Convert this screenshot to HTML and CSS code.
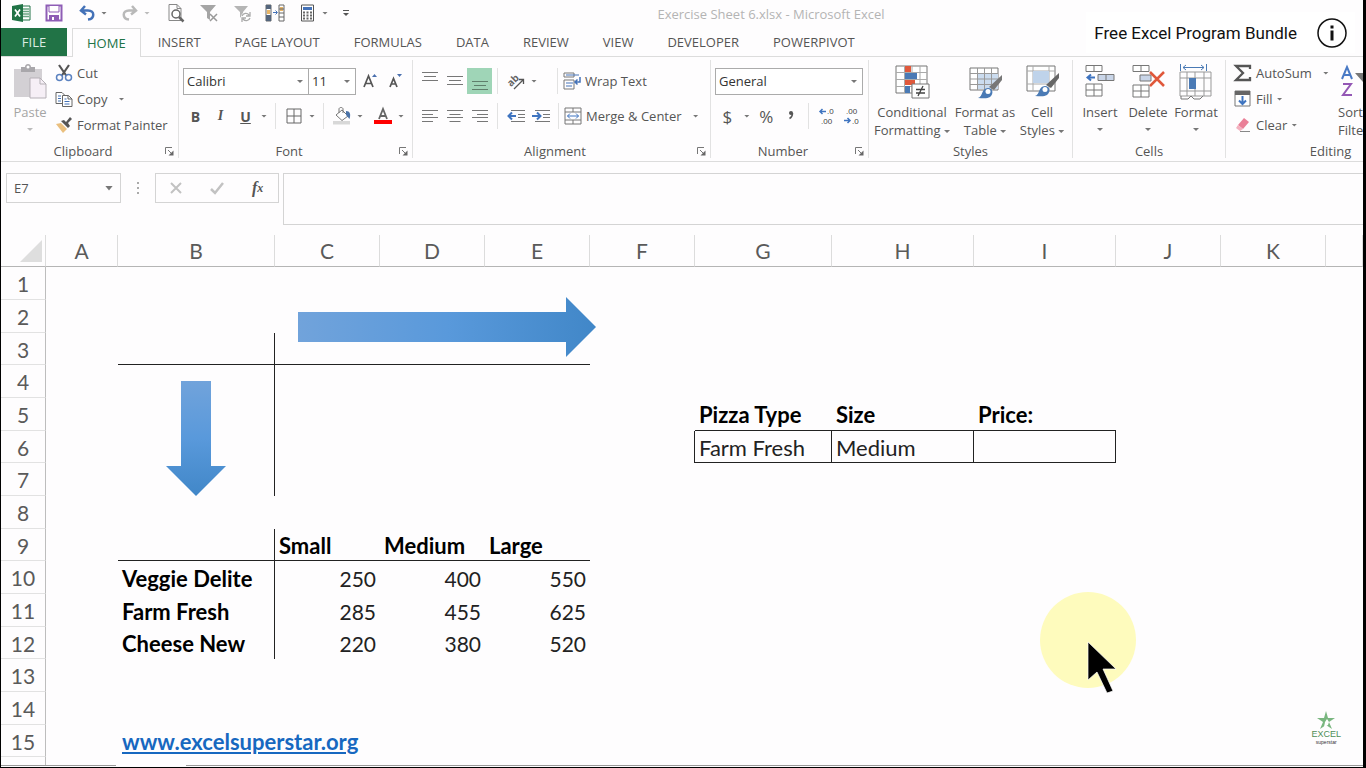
FILE: index.html
```html
<!DOCTYPE html>
<html lang="en">

<head>
    <meta charset="UTF-8">
    <meta name="viewport" content="width=device-width, initial-scale=1.0">
    <title>Exercise Sheet 6.xlsx - Microsoft Excel</title>
    <link rel="stylesheet" href="styles.css">
</head>

<body>
    <div class="window">
        <header class="titlebar">
            <div class="quick-access">
                <svg class="app-logo" width="20" height="20" viewBox="0 0 20 20">
                    <path d="M11 3h8v14h-8z" fill="#fff" stroke="#217346" />
                    <path d="M12 6h6M12 8.500h6M12 11h6M12 13.500h6" stroke="#6aa583" stroke-width="1.500" />
                    <path d="M1 3l11-2v18L1 17z" fill="#217346" />
                    <path d="M4 6.500l5 7M9 6.500l-5 7" stroke="#fff" stroke-width="1.700" />
                </svg>
                <button class="btn qat" aria-label="Save">
                    <svg width="18" height="18" viewBox="0 0 18 18">
                        <path d="M1.500 1.500h15v15h-15z" fill="#fff" stroke="#8e5db5" stroke-width="2" />
                        <path d="M4 2v6h10V2" fill="#fff" stroke="#8e5db5" />
                        <path d="M4 11h10v6H4z" fill="#8e5db5" />
                        <path d="M7 13h2v3H7z" fill="#fff" />
                    </svg>
                </button>
                <button class="btn qat" aria-label="Undo">
                    <svg width="18" height="18" viewBox="0 0 18 18" fill="none" stroke="#4472b8" stroke-width="2.500">
                        <path d="M7 2L3 6.500l5 4M3 6.500h7c7 0 7 8 0 9" />
                    </svg>
                </button>
                <span class="caret"></span>
                <button class="btn qat redo" aria-label="Redo">
                    <svg width="18" height="18" viewBox="0 0 18 18" fill="none" stroke="#b9b9b9" stroke-width="2.500">
                        <path d="M11 2l4 4.500-5 4M15 6.500H8c-7 0-7 8 0 9" />
                    </svg>
                </button>
                <span class="caret pale"></span>
                <button class="btn qat preview" aria-label="Print Preview">
                    <svg width="18" height="20" viewBox="0 0 18 20" fill="none" stroke="#666">
                        <path d="M2 1.500h8l4 4v12H2zM10 1.500v4h4" stroke="#888" />
                        <circle cx="9" cy="11" r="4" fill="#fff" stroke-width="1.500" />
                        <path d="M12 14l4.500 4.500" stroke-width="2.500" />
                    </svg>
                </button>
                <button class="btn qat" aria-label="Clear Filter">
                    <svg width="20" height="20" viewBox="0 0 20 20">
                        <path d="M1 2h16l-6 7v8l-3-2V9z" fill="#a5a5a5" />
                        <path d="M11 11l7 7M18 11l-7 7" stroke="#999" stroke-width="1.500" />
                    </svg>
                </button>
                <button class="btn qat" aria-label="Reapply Filter">
                    <svg width="20" height="20" viewBox="0 0 20 20">
                        <path d="M2 3h14l-5 6v7l-3-2V9z" fill="#b5b5b5" />
                        <circle cx="14" cy="14" r="5" fill="#fff" />
                        <path d="M10 13a4 4 0 0 1 7-1M18 15a4 4 0 0 1-7 1M18 9v4h-4M10 19v-4h4" fill="none" stroke="#aaa" stroke-width="1.300" />
                    </svg>
                </button>
                <button class="btn qat" aria-label="Compare">
                    <svg width="20" height="18" viewBox="0 0 20 18">
                        <path d="M1 1h5v16H1zM14 1h5v16h-5z" fill="#fff" stroke="#666" />
                        <path d="M1 1h5v4H1zM1 11h5v6H1z" fill="#54657c" />
                        <path d="M2 6h3v4H2zM15 3h3v4h-3z" fill="#e9b667" />
                        <path d="M14 5h5M14 9h5M14 13h5" stroke="#666" />
                        <path d="M8 8.500h4M10.500 6.500l2 2-2 2" fill="none" stroke="#4472b8" />
                    </svg>
                </button>
                <button class="btn qat" aria-label="Calculator">
                    <svg width="16" height="18" viewBox="0 0 16 18">
                        <path d="M1.500 1h12v16h-12z" fill="#fff" stroke="#555" />
                        <path d="M3 3h9v3H3z" fill="#4472b8" />
                        <path d="M3 8.500h9M3 11.500h9M3 14.500h9" stroke="#666" stroke-width="2" stroke-dasharray="2 1.500" />
                    </svg>
                </button>
                <span class="caret"></span>
                <button class="btn more" aria-label="Customize Quick Access Toolbar">
                    <svg width="8" height="8" viewBox="0 0 8 8">
                        <path d="M1 1.500h6" stroke="#555" />
                        <path d="M1 4h6L4 7z" fill="#555" />
                    </svg>
                </button>
            </div>
            <div class="title">Exercise Sheet 6.xlsx - Microsoft Excel</div>
        </header>

        <nav class="tabs">
            <button class="tab file">FILE</button>
            <button class="tab active">HOME</button>
            <button class="tab">INSERT</button>
            <button class="tab">PAGE LAYOUT</button>
            <button class="tab">FORMULAS</button>
            <button class="tab">DATA</button>
            <button class="tab">REVIEW</button>
            <button class="tab">VIEW</button>
            <button class="tab">DEVELOPER</button>
            <button class="tab">POWERPIVOT</button>
        </nav>

        <div class="ribbon">
            <!-- Clipboard -->
            <section class="group clipboard">
                <div class="group-body">
                    <button class="big paste">
                        <svg width="34" height="36" viewBox="0 0 34 36">
                            <path d="M1 5h28v28H1z" fill="#d3d0d4" />
                            <path d="M8 3h4c0-4 6-4 6 0h4v5H8z" fill="#a9a7ab" />
                            <circle cx="15" cy="3" r="1.500" fill="#fff" />
                            <path d="M17 14h10l6 6v14H17z" fill="#f6eff6" stroke="#b5b0b6" />
                            <path d="M27 14v6h6" fill="none" stroke="#b5b0b6" />
                        </svg>
                        <span>Paste</span>
                        <span class="caret pale"></span>
                    </button>
                    <div class="stack">
                        <button class="btn small">
                            <svg width="18" height="18" viewBox="0 0 18 18" fill="none">
                                <path d="M4 1l7.500 11M14 1L6.500 12" stroke="#555" stroke-width="2.200" />
                                <circle cx="4.500" cy="13.500" r="3" stroke="#5b82c0" stroke-width="1.500" />
                                <circle cx="13.500" cy="13.500" r="3" stroke="#5b82c0" stroke-width="1.500" />
                            </svg>
                            Cut
                        </button>
                        <button class="btn small">
                            <svg width="18" height="18" viewBox="0 0 18 18" fill="#fff" stroke="#666">
                                <path d="M1 2.500h6l3 3v8H1z" />
                                <path d="M3 6h3M3 8.500h3M3 11h3" stroke="#4472b8" />
                                <path d="M7.500 5.500h6l3.500 3.500v7.500h-9.500zM13 5.500V9h4" />
                                <path d="M9.500 9h2M9.500 11.500h5M9.500 14h5" stroke="#4472b8" />
                            </svg>
                            Copy <span class="caret gap"></span>
                        </button>
                        <button class="btn small">
                            <svg width="18" height="18" viewBox="0 0 18 18">
                                <path d="M1 8l5-1 6 6-4 4z" fill="#eabf7e" />
                                <path d="M6 5l3-1 2 2 4-5 2 2-4 4 2 3-2 2z" fill="#555" />
                            </svg>
                            Format Painter
                        </button>
                    </div>
                </div>
                <div class="group-foot">
                    <span>Clipboard</span>
                    <button class="launcher" aria-label="Clipboard settings"><svg width="9" height="9" viewBox="0 0 9 9"><path d="M.5 7V.5H7M3 3l4 4" fill="none" stroke="#777" /><path d="M8.500 3.500v5h-5z" fill="#666" /></svg></button>
                </div>
            </section>

            <!-- Font -->
            <section class="group font">
                <div class="group-body rows">
                    <div class="line">
                        <select class="combo name" aria-label="Font"><option>Calibri</option></select>
                        <select class="combo size" aria-label="Font size"><option>11</option></select>
                        <button class="btn tool grow" aria-label="Increase Font Size">
                            <svg width="18" height="18" viewBox="0 0 18 18"><path d="M2 15L6.500 4 11 15M3.500 11.500h6" fill="none" stroke="#555" stroke-width="1.700" /><path d="M10 5l2.500-3L15 5z" fill="#4a6fae" /></svg>
                        </button>
                        <button class="btn tool" aria-label="Decrease Font Size">
                            <svg width="18" height="18" viewBox="0 0 18 18"><path d="M3 15l3.500-8.500L10 15M4.500 12h4" fill="none" stroke="#555" stroke-width="1.700" /><path d="M10 2h5l-2.500 3z" fill="#4a6fae" /></svg>
                        </button>
                    </div>
                    <div class="line">
                        <button class="btn tool"><b>B</b></button>
                        <button class="btn tool"><i class="italic">I</i></button>
                        <button class="btn tool"><b class="underline">U</b></button>
                        <span class="caret"></span>
                        <span class="sep"></span>
                        <button class="btn tool" aria-label="Borders">
                            <svg width="16" height="16" viewBox="0 0 16 16"><path d="M1 1h14v14H1zM8 1v14M1 8h14" fill="none" stroke="#666" /></svg>
                        </button>
                        <span class="caret"></span>
                        <span class="sep"></span>
                        <button class="btn tool" aria-label="Fill Color">
                            <svg width="20" height="18" viewBox="0 0 20 18">
                                <path d="M1 14h17v3.500H1z" fill="#d8d8d8" />
                                <path d="M4 8l6-5 6 6-6 4.500z" fill="#fff" stroke="#777" />
                                <path d="M7 6V2c0-2 4-2 4 0v4" fill="none" stroke="#777" />
                                <path d="M14 4c4 0 5 3 3.500 8L14 8z" fill="#4b73a8" />
                            </svg>
                        </button>
                        <span class="caret"></span>
                        <button class="btn tool color" aria-label="Font Color">
                            <svg width="18" height="18" viewBox="0 0 18 18"><path d="M5 12L9 2l4 10M6 9h6" fill="none" stroke="#666" stroke-width="1.800" /><path d="M0 13h18v4H0z" fill="#f00" /></svg>
                        </button>
                        <span class="caret"></span>
                    </div>
                </div>
                <div class="group-foot">
                    <span>Font</span>
                    <button class="launcher" aria-label="Font settings"><svg width="9" height="9" viewBox="0 0 9 9"><path d="M.5 7V.5H7M3 3l4 4" fill="none" stroke="#777" /><path d="M8.500 3.500v5h-5z" fill="#666" /></svg></button>
                </div>
            </section>

            <!-- Alignment -->
            <section class="group alignment">
                <div class="group-body rows">
                    <div class="line">
                        <button class="btn tool" aria-label="Top Align"><svg width="16" height="18" viewBox="0 0 16 18"><path d="M0 .5h16M2 4.500h12M0 8.500h16" stroke="#777" /></svg></button>
                        <button class="btn tool" aria-label="Middle Align"><svg width="16" height="18" viewBox="0 0 16 18"><path d="M0 4.500h16M2 8.500h12M0 12.500h16" stroke="#777" /></svg></button>
                        <button class="btn tool on" aria-label="Bottom Align"><svg width="16" height="18" viewBox="0 0 16 18"><path d="M0 9.500h16M2 13.500h12M0 17.500h16" stroke="#5f7f6c" /></svg></button>
                        <span class="sep"></span>
                        <button class="btn tool" aria-label="Orientation">
                            <svg width="20" height="20" viewBox="0 0 20 20"><text x="1" y="13" transform="rotate(-45 7 10)" class="ab">ab</text><path d="M8 18l9-9M13 8.500h4.500V13" fill="none" stroke="#555" stroke-width="1.300" /></svg>
                        </button>
                        <span class="caret"></span>
                        <span class="sep wide"></span>
                        <button class="btn small wrap">
                            <svg width="18" height="18" viewBox="0 0 18 18" fill="none" stroke="#777">
                                <path d="M1 1h10v4H1zM1 8h10v9H1z" />
                                <path d="M3 3h13M3 11h7M3 14h6" stroke="#4472b8" />
                                <path d="M17 5v5h-4M14.500 7.500L12 10l2.500 2.500" stroke="#4472b8" stroke-width="1.500" />
                            </svg>
                            Wrap Text
                        </button>
                    </div>
                    <div class="line">
                        <button class="btn tool" aria-label="Align Left"><svg width="16" height="14" viewBox="0 0 16 14"><path d="M0 1.500h16M0 5.500h11M0 8.500h16M0 12.500h11" stroke="#777" /></svg></button>
                        <button class="btn tool" aria-label="Center"><svg width="16" height="14" viewBox="0 0 16 14"><path d="M0 1.500h16M2.500 5.500h11M0 8.500h16M2.500 12.500h11" stroke="#777" /></svg></button>
                        <button class="btn tool" aria-label="Align Right"><svg width="16" height="14" viewBox="0 0 16 14"><path d="M0 1.500h16M5 5.500h11M0 8.500h16M5 12.500h11" stroke="#777" /></svg></button>
                        <span class="sep"></span>
                        <button class="btn tool" aria-label="Decrease Indent"><svg width="18" height="14" viewBox="0 0 18 14"><path d="M4 1.500h14M11 5.500h7M11 8.500h7M4 12.500h14" stroke="#777" /><path d="M9 7H2M5 3.500L1.500 7 5 10.500" fill="none" stroke="#3f74c0" stroke-width="2" /></svg></button>
                        <button class="btn tool" aria-label="Increase Indent"><svg width="18" height="14" viewBox="0 0 18 14"><path d="M3 1.500h15M11 5.500h7M11 8.500h7M3 12.500h15" stroke="#777" /><path d="M0 7h8M5 3.500L8.500 7 5 10.500" fill="none" stroke="#3f74c0" stroke-width="2" /></svg></button>
                        <span class="sep"></span>
                        <button class="btn small merge">
                            <svg width="18" height="18" viewBox="0 0 18 18" fill="none" stroke="#777">
                                <path d="M1 1h16v16H1zM1 5h16M1 13h16M9 1v4M9 13v4" />
                                <path d="M3.500 9h11M6 6.500L3.500 9 6 11.500M12 6.500L14.500 9 12 11.500" stroke="#3f74c0" />
                            </svg>
                            Merge &amp; Center <span class="caret gap"></span>
                        </button>
                    </div>
                </div>
                <div class="group-foot">
                    <span>Alignment</span>
                    <button class="launcher" aria-label="Alignment settings"><svg width="9" height="9" viewBox="0 0 9 9"><path d="M.5 7V.5H7M3 3l4 4" fill="none" stroke="#777" /><path d="M8.500 3.500v5h-5z" fill="#666" /></svg></button>
                </div>
            </section>

            <!-- Number -->
            <section class="group number">
                <div class="group-body rows">
                    <div class="line">
                        <select class="combo format" aria-label="Number format"><option>General</option></select>
                    </div>
                    <div class="line">
                        <button class="btn tool sign">$</button>
                        <span class="caret"></span>
                        <button class="btn tool sign">%</button>
                        <button class="btn tool sign" aria-label="Comma Style">
                            <svg width="8" height="12" viewBox="0 0 8 12"><circle cx="4" cy="3" r="2" fill="#555" /><path d="M5.500 3c0 3-1 4.500-3 5.500" fill="none" stroke="#555" stroke-width="1.500" /></svg>
                        </button>
                        <span class="sep"></span>
                        <button class="btn tool" aria-label="Increase Decimal">
                            <svg width="18" height="22" viewBox="0 0 18 22"><path d="M8 6.500H2M4.500 4L2 6.500 4.500 9" fill="none" stroke="#3f74c0" stroke-width="1.500" /><text x="9" y="9" class="dec">.0</text><text x="3" y="19" class="dec">.00</text></svg>
                        </button>
                        <button class="btn tool" aria-label="Decrease Decimal">
                            <svg width="18" height="22" viewBox="0 0 18 22"><path d="M1 15.500h6M4.500 13L7 15.500 4.500 18" fill="none" stroke="#3f74c0" stroke-width="1.500" /><text x="3" y="9" class="dec">.00</text><text x="9" y="19" class="dec">.0</text></svg>
                        </button>
                    </div>
                </div>
                <div class="group-foot">
                    <span>Number</span>
                    <button class="launcher" aria-label="Number settings"><svg width="9" height="9" viewBox="0 0 9 9"><path d="M.5 7V.5H7M3 3l4 4" fill="none" stroke="#777" /><path d="M8.500 3.500v5h-5z" fill="#666" /></svg></button>
                </div>
            </section>

            <!-- Styles -->
            <section class="group styles">
                <div class="group-body">
                    <button class="big conditional">
                        <svg width="36" height="36" viewBox="0 0 36 36">
                            <path d="M2 2h31v27H2z" fill="#fff" stroke="#777" />
                            <path d="M2 8.500h31M2 15.500h31M2 22.500h31M10.500 2v27M18 2v27M26 2v27" stroke="#aaa" />
                            <path d="M11 2h6v6h-6zM11 16h10v5H11z" fill="#e0583b" />
                            <path d="M11 9h12v6H11zM11 22h5v7h-5z" fill="#4a7ab5" />
                            <path d="M18 20h17v14H18z" fill="#fff" stroke="#777" />
                            <path d="M22 25.500h9M22 29h9M29 22l-5 10" stroke="#444" stroke-width="1.300" />
                        </svg>
                        <span>Conditional</span>
                        <span>Formatting <span class="caret"></span></span>
                    </button>
                    <button class="big table-style">
                        <svg width="36" height="36" viewBox="0 0 36 36">
                            <path d="M3 4h28v22H3z" fill="#fff" stroke="#777" />
                            <path d="M11 10h20v15H11z" fill="#cbdcef" />
                            <path d="M3 9.500h28M3 15h28M3 20.500h28M10.500 4v22M17.500 4v22M24.500 4v22" stroke="#999" />
                            <path d="M35 11v5L27 26l-5-3z" fill="#777" />
                            <path d="M11 34c5-1 3-10 10-10 5 0 6 6 2 9-3 2-8 1-12 1z" fill="#4a7ab5" />
                            <circle cx="21" cy="27.500" r="2.500" fill="#fff" />
                        </svg>
                        <span>Format as</span>
                        <span>Table <span class="caret"></span></span>
                    </button>
                    <button class="big cell-style">
                        <svg width="36" height="36" viewBox="0 0 36 36">
                            <path d="M3 2h28v25H3z" fill="#fff" stroke="#777" />
                            <path d="M3 7h28M3 20h28M9 2v25M25 2v25" stroke="#aaa" />
                            <path d="M9 7h16v12H9z" fill="#bfd3ea" />
                            <path d="M35 9v5L27 24l-5-3z" fill="#666" />
                            <path d="M11 32c5-1 3-10 10-10 5 0 6 6 2 9-3 2-8 1-12 1z" fill="#4a7ab5" />
                            <circle cx="21" cy="25.500" r="2.500" fill="#fff" />
                        </svg>
                        <span>Cell</span>
                        <span>Styles <span class="caret"></span></span>
                    </button>
                </div>
                <div class="group-foot"><span>Styles</span></div>
            </section>

            <!-- Cells -->
            <section class="group cells">
                <div class="group-body">
                    <button class="big">
                        <svg width="34" height="36" viewBox="0 0 34 36" fill="#fff" stroke="#777">
                            <path d="M3 1.500h16v6H3zM11 1.500v6M3 20h16v12H3zM3 26h16M11 20v12" />
                            <path d="M15 10.500h16v6H15z" fill="#c9d5e8" />
                            <path d="M23 10.500v6" />
                            <path d="M12 13.500H5M8 10.500L4.500 13.500 8 16.500" fill="none" stroke="#3f74c0" stroke-width="2" />
                        </svg>
                        <span>Insert</span>
                        <span class="caret"></span>
                    </button>
                    <button class="big">
                        <svg width="34" height="36" viewBox="0 0 34 36" fill="#fff" stroke="#777">
                            <path d="M2 1.500h16v6H2zM10 1.500v6M2 21h16v12H2zM2 27h16M10 21v12" />
                            <path d="M9 11h11v6H9z" fill="#c9d5e8" />
                            <path d="M19 8l14 14M33 8L19 22" stroke="#e0583b" stroke-width="2.500" />
                        </svg>
                        <span>Delete</span>
                        <span class="caret"></span>
                    </button>
                    <button class="big">
                        <svg width="34" height="36" viewBox="0 0 34 36" fill="none" stroke="#999">
                            <path d="M1 8h31v24H1zM1 14h31M1 27h31M8 8v24M16 8v24M25 8v24" />
                            <path d="M2 32v3h7l3-3 3 3h6l3-3" stroke="#777" />
                            <path d="M10 14h7v11h-7z" fill="#4a7ab5" stroke="none" />
                            <path d="M1.500 0v7M27.500 0v7M4 3.500h21M7 1L4 3.500 7 6M22 1l3 2.500L22 6" stroke="#4a7ab5" />
                        </svg>
                        <span>Format</span>
                        <span class="caret"></span>
                    </button>
                </div>
                <div class="group-foot"><span>Cells</span></div>
            </section>

            <!-- Editing -->
            <section class="group editing">
                <div class="group-body">
                    <div class="stack">
                        <button class="btn small">
                            <svg width="18" height="18" viewBox="0 0 18 18"><path d="M16 5V2H2l7 7-7 7h14v-3" fill="none" stroke="#555" stroke-width="2.300" /></svg>
                            AutoSum <span class="caret gap"></span>
                        </button>
                        <button class="btn small">
                            <svg width="18" height="18" viewBox="0 0 18 18"><path d="M1 1h15v15H1z" fill="#fff" stroke="#777" /><path d="M1 1h15v4H1z" fill="#666" /><path d="M8.500 6v8M5 10.500L8.500 14l3.500-3.500" fill="none" stroke="#3f74c0" stroke-width="2" /></svg>
                            Fill <span class="caret"></span>
                        </button>
                        <button class="btn small">
                            <svg width="18" height="18" viewBox="0 0 18 18"><path d="M4 9l6-7 5 4-6 7z" fill="#ea7f97" /><path d="M4 9l5 4-3 2-4-3z" fill="#f3b1bf" /><path d="M6 15.500h10" stroke="#888" /></svg>
                            Clear <span class="caret"></span>
                        </button>
                    </div>
                    <button class="big sort">
                        <svg width="40" height="36" viewBox="0 0 40 36">
                            <path d="M4 15l5-12 5 12M6 11h6" fill="none" stroke="#4a7ac5" stroke-width="2" />
                            <path d="M5 20h8L5 31h9" fill="none" stroke="#9457b5" stroke-width="2" />
                            <path d="M17 9h20l-8 9v12l-4-3v-9z" fill="#777" />
                        </svg>
                        <span>Sort &amp;</span>
                        <span>Filter <span class="caret"></span></span>
                    </button>
                </div>
                <div class="group-foot"><span>Editing</span></div>
            </section>
        </div>

        <div class="formula-bar">
            <div class="name-box">
                <input type="text" value="E7" aria-label="Name Box">
                <span class="caret large"></span>
            </div>
            <span class="grip"></span>
            <div class="formula-buttons">
                <button class="btn" aria-label="Cancel"><svg width="14" height="14" viewBox="0 0 14 14"><path d="M2 2l10 10M12 2L2 12" stroke="#c2c2c2" stroke-width="2" /></svg></button>
                <button class="btn" aria-label="Enter"><svg width="16" height="14" viewBox="0 0 16 14"><path d="M2 8l4 4 8-10" fill="none" stroke="#c2c2c2" stroke-width="2.500" /></svg></button>
                <button class="btn fx">f<small>x</small></button>
            </div>
            <textarea class="formula-input" aria-label="Formula Bar"></textarea>
        </div>

        <main class="sheet">
            <table class="grid">
                <colgroup>
                    <col class="w-head">
                    <col class="w-a">
                    <col class="w-b">
                    <col class="w-std" span="4">
                    <col class="w-g">
                    <col class="w-hi" span="2">
                    <col class="w-std" span="2">
                    <col>
                </colgroup>
                <thead>
                    <tr>
                        <th class="corner"><svg width="24" height="24" viewBox="0 0 24 24"><path d="M23 1v22H1z" fill="#dedede" /></svg></th>
                        <th>A</th>
                        <th>B</th>
                        <th>C</th>
                        <th>D</th>
                        <th>E</th>
                        <th>F</th>
                        <th>G</th>
                        <th>H</th>
                        <th>I</th>
                        <th>J</th>
                        <th>K</th>
                        <th></th>
                    </tr>
                </thead>
                <tbody>
                    <tr><th>1</th><td colspan="12"></td></tr>
                    <tr><th>2</th><td colspan="12"></td></tr>
                    <tr><th>3</th><td></td><td class="right bottom"></td><td class="bottom" colspan="3"></td><td colspan="7"></td></tr>
                    <tr><th>4</th><td></td><td class="right"></td><td colspan="10"></td></tr>
                    <tr><th>5</th><td></td><td class="right"></td><td colspan="4"></td><td class="bold bottom">Pizza Type</td><td class="bold bottom">Size</td><td class="bold bottom">Price:</td><td colspan="3"></td></tr>
                    <tr><th>6</th><td></td><td class="right"></td><td class="right" colspan="4"></td><td class="right bottom">Farm Fresh</td><td class="right bottom">Medium</td><td class="right bottom"></td><td colspan="3"></td></tr>
                    <tr><th>7</th><td></td><td class="right"></td><td colspan="10"></td></tr>
                    <tr><th>8</th><td colspan="12"></td></tr>
                    <tr><th>9</th><td></td><td class="right bottom"></td><td class="bold bottom">Small</td><td class="bold bottom">Medium</td><td class="bold bottom">Large</td><td colspan="7"></td></tr>
                    <tr><th>10</th><td></td><td class="bold right">Veggie Delite</td><td class="num">250</td><td class="num">400</td><td class="num">550</td><td colspan="7"></td></tr>
                    <tr><th>11</th><td></td><td class="bold right">Farm Fresh</td><td class="num">285</td><td class="num">455</td><td class="num">625</td><td colspan="7"></td></tr>
                    <tr><th>12</th><td></td><td class="bold right">Cheese New</td><td class="num">220</td><td class="num">380</td><td class="num">520</td><td colspan="7"></td></tr>
                    <tr><th>13</th><td colspan="12"></td></tr>
                    <tr><th>14</th><td colspan="12"></td></tr>
                    <tr><th>15</th><td></td><td class="bold" colspan="3"><a href="#">www.excelsuperstar.org</a></td><td colspan="8"></td></tr>
                    <tr><th></th><td colspan="12"></td></tr>
                </tbody>
            </table>

            <!-- shapes drawn over the cells -->
            <svg class="arrow-right" width="298" height="60" viewBox="0 0 298 60">
                <defs>
                    <linearGradient id="across">
                        <stop offset="0" stop-color="#71a3db" />
                        <stop offset=".5" stop-color="#5999db" />
                        <stop offset="1" stop-color="#4187c8" />
                    </linearGradient>
                </defs>
                <path d="M0 15h268V0l30 30-30 30V45H0z" fill="url(#across)" />
            </svg>
            <svg class="arrow-down" width="60" height="115" viewBox="0 0 60 115">
                <defs>
                    <linearGradient id="down" x1="0" y1="0" x2="0" y2="1">
                        <stop offset="0" stop-color="#71a3db" />
                        <stop offset=".5" stop-color="#5999db" />
                        <stop offset="1" stop-color="#4187c8" />
                    </linearGradient>
                </defs>
                <path d="M15 0h30v85h15L30 115 0 85h15z" fill="url(#down)" />
            </svg>
            <svg class="pointer" width="96" height="104" viewBox="0 0 96 104">
                <circle cx="48" cy="48" r="48" fill="#fefbbd" />
                <path d="M48 50v38l9-8 10 21 6-2-10-22h13z" fill="#000" stroke="#fff" stroke-width=".7" />
            </svg>
            <div class="watermark">
                <svg width="18" height="18" viewBox="0 0 18 18">
                    <path d="M9 0l2 7h7l-6 4 3 7-6-4-6 4 3-7-6-4h7z" fill="#79b67f" />
                    <path d="M10 8l2 3-1 3-4 2 1-5z" fill="#fff" />
                </svg>
                <span class="brand">EXCEL</span>
                <span class="brand-sub">superstar</span>
            </div>
        </main>
        <footer class="sheet-tabs"><span class="before"></span><span class="current"></span><span class="after"></span></footer>

        <a class="info-card" href="#">
            Free Excel Program Bundle
            <svg width="30" height="30" viewBox="0 0 30 30">
                <circle cx="15" cy="15" r="14" fill="none" stroke="#111" stroke-width="1.500" />
                <path d="M13.500 7.500h3v3h-3zM13.500 12.500h3v10h-3z" fill="#111" />
            </svg>
        </a>
    </div>
</body>

</html>
```
FILE: styles.css
```css
* {
    box-sizing: border-box;
}

body {
    margin: 0;
    background-color: #000;
    font-family: "Open Sans", "Noto Sans", sans-serif;
    font-size: 13px;
    color: #555;
}

.window {
    position: relative;
    display: flex;
    flex-direction: column;
    height: 100vh;
    margin-left: 1px;
    margin-right: 3px;
    border-bottom: 1px solid #000;
    background-color: #fefdfe;
    overflow: hidden;
}

svg {
    display: block;
    flex: none;
    overflow: visible;
}

button {
    border: 0;
    padding: 0;
    background: none;
    color: inherit;
    font: inherit;
    white-space: nowrap;
}

.btn {
    display: flex;
    align-items: center;
    justify-content: center;
    height: 26px;
}

/* small drop-down triangle */
.caret {
    display: inline-block;
    flex: none;
    width: 6px;
    height: 3px;
    background-color: #777;
    clip-path: polygon(0 0, 100% 0, 50% 100%);
    vertical-align: middle;
}

.caret.pale {
    background-color: #bbb;
}

.caret.large {
    width: 8px;
    height: 5px;
}

.sep {
    width: 1px;
    height: 26px;
    margin: 0 5px;
    background-color: #e2e2e2;
}

/* title bar */
.titlebar {
    display: flex;
    align-items: center;
    flex: none;
    height: 28px;
    padding-right: 180px;
}

.quick-access {
    display: flex;
    align-items: center;
    width: 358px;
    padding-left: 10px;
    padding-bottom: 2px;
}

.qat {
    width: 20px;
    margin-left: 13px;
}

.quick-access .caret {
    margin-left: 4px;
}

.quick-access .preview {
    margin-left: 16px;
}

.more {
    margin-left: 14px;
}

.title {
    flex: 1;
    text-align: center;
    color: #b4b4b4;
}

/* ribbon tabs */
.tabs {
    display: flex;
    flex: none;
    height: 29px;
    border-bottom: 1px solid #dcdcdc;
}

.tab {
    height: 28px;
    padding: 0 17px;
}

.tab.file {
    width: 66px;
    margin-right: 5px;
    background-color: #217346;
    color: #dcebe2;
}

.tab.active {
    height: 29px;
    padding: 0 14px;
    border: 1px solid #dcdcdc;
    border-bottom: 0;
    background-color: #fefdfe;
    color: #217346;
}

/* ribbon */
.ribbon {
    display: flex;
    height: 105px;
    flex: none;
    border-bottom: 1px solid #dcdcdc;
    overflow: hidden;
}

.group {
    display: flex;
    flex-direction: column;
    flex: none;
    border-right: 1px solid #e2e2e2;
    margin: 3px 0;
}

.clipboard {
    width: 178px;
}

.font {
    width: 234px;
}

.alignment {
    width: 298px;
}

.number {
    width: 158px;
}

.styles {
    width: 204px;
}

.cells {
    width: 153px;
}

.editing {
    width: 210px;
}

.group-body {
    display: flex;
    flex: none;
    height: 82px;
    padding: 0 4px;
}

.group-body.rows {
    flex-direction: column;
    gap: 9px;
    padding-top: 8px;
}

.line {
    display: flex;
    align-items: center;
    height: 26px;
}

.group-foot {
    display: flex;
    align-items: center;
    height: 18px;
}

.group-foot span {
    flex: 1;
    text-align: center;
}

.launcher {
    width: 13px;
}

.stack {
    display: flex;
    flex-direction: column;
    align-items: flex-start;
}

.small {
    gap: 4px;
}

.caret.gap {
    margin-left: 7px;
}

.tool {
    width: 25px;
    font-size: 14px;
}

.tool.on {
    background-color: #9fd5b7;
}

.tool.grow {
    margin-left: 2px;
}

.tool.color {
    margin-left: 4px;
}

.italic {
    font-family: "Liberation Serif", serif;
    font-weight: bold;
}

.underline {
    text-decoration: underline;
}

.font .tool + .caret,
.alignment .tool + .caret {
    margin: 0 3px;
}

.number .tool + .caret {
    margin: 0 4px;
}

.sep.wide {
    margin-left: 17px;
}

.sign {
    font-size: 17px;
}

.ab {
    font-size: 10px;
    font-weight: bold;
    fill: #666;
}

.dec {
    font-family: "Liberation Sans", sans-serif;
    font-size: 8px;
    fill: #444;
}

.combo {
    appearance: none;
    height: 27px;
    padding: 0 3px;
    border: 1px solid #ababab;
    border-radius: 0;
    background: #fff url("data:image/svg+xml,%3Csvg xmlns='http://www.w3.org/2000/svg' width='6' height='3'%3E%3Cpath d='M0 0h6L3 3z' fill='%23777'/%3E%3C/svg%3E") no-repeat right 5px center;
    color: #333;
    font: inherit;
}

.combo.name {
    width: 126px;
}

.combo.size {
    width: 48px;
    margin-left: -1px;
}

.combo.format {
    width: 148px;
}

.big {
    display: flex;
    flex-direction: column;
    align-items: center;
    width: 48px;
    line-height: 18px;
}

.big svg {
    height: 36px;
    margin-top: 4px;
    margin-bottom: 3px;
}

.big > .caret {
    margin-top: 7px;
}

.paste {
    width: 50px;
    color: #a5a5a5;
}

.conditional {
    width: 80px;
}

.table-style {
    width: 66px;
}

.styles .group-body,
.cells .group-body {
    padding: 0 3px;
}

.editing .stack {
    width: 108px;
    padding-left: 4px;
}

.sort {
    width: 52px;
    align-items: flex-start;
}

/* formula bar */
.formula-bar {
    display: flex;
    align-items: flex-start;
    flex: none;
    height: 73px;
    padding-top: 11px;
    padding-left: 5px;
}

.name-box {
    display: flex;
    align-items: center;
    width: 115px;
    height: 30px;
    padding-right: 7px;
    border: 1px solid #d4d4d4;
}

.name-box input {
    flex: 1;
    min-width: 0;
    border: 0;
    padding: 0 7px;
    background: none;
    color: #555;
    font: inherit;
}

.grip {
    width: 2px;
    height: 12px;
    margin: 9px 16px;
    background: repeating-linear-gradient(#aaa 0 2px, transparent 2px 5px);
}

.formula-buttons {
    display: flex;
    width: 124px;
    height: 30px;
    border: 1px solid #d4d4d4;
}

.formula-buttons .btn {
    flex: 1;
    height: 28px;
}

.fx {
    font: italic bold 16px "Liberation Serif", serif;
}

.fx small {
    font-size: 12px;
}

.formula-input {
    flex: 1;
    height: 52px;
    margin-left: 4px;
    border: 1px solid #d4d4d4;
    border-right: 0;
    background: none;
    resize: none;
}

/* worksheet */
.sheet {
    position: relative;
    flex: 1;
    min-height: 0;
    overflow: hidden;
}

.grid {
    width: 100%;
    table-layout: fixed;
    border-collapse: separate;
    border-spacing: 0;
    font-family: Lato, sans-serif;
    font-size: 22px;
    line-height: 26px;
    color: #222;
}

.w-head {
    width: 45px;
}

.w-a {
    width: 72px;
}

.w-b {
    width: 157px;
}

.w-std {
    width: 105px;
}

.w-g {
    width: 137px;
}

.w-hi {
    width: 142px;
}

.grid tr {
    height: 33px;
}

.grid tbody tr:nth-child(3n),
.grid thead tr {
    height: 32px;
}

.grid th {
    padding: 0;
    border-right: 1px solid #dcdcdc;
    border-bottom: 1px solid #b5b5b5;
    color: #5a5a5a;
    font-size: 21px;
    font-weight: normal;
}

.grid tbody th {
    padding-top: 2px;
    border-right-color: #bdbdbd;
    border-bottom-color: #e2e2e2;
}

.grid .corner svg {
    margin-left: 18px;
}

.grid td {
    padding: 2px 4px 0;
    white-space: nowrap;
}

.grid .right {
    border-right: 1px solid #222;
}

.grid .bottom {
    border-bottom: 1px solid #222;
}

.grid .bold {
    color: #000;
    font-weight: bold;
}

.grid .num {
    font-size: 21px;
    text-align: right;
}

.grid a {
    color: #1768c0;
}

.arrow-right {
    position: absolute;
    top: 62px;
    left: 297px;
}

.arrow-down {
    position: absolute;
    top: 146px;
    left: 165px;
}

.pointer {
    position: absolute;
    top: 357px;
    left: 1039px;
}

.watermark {
    position: absolute;
    right: 22px;
    bottom: 20px;
    display: flex;
    flex-direction: column;
    align-items: center;
    font-family: "Liberation Sans", sans-serif;
}

.brand {
    color: #4f8f57;
    font-size: 9px;
    line-height: 10px;
}

.brand-sub {
    color: #333;
    font-size: 5px;
    line-height: 6px;
}

.sheet-tabs {
    display: flex;
    flex: none;
    height: 2px;
}

.sheet-tabs .before {
    width: 115px;
    border-top: 1px solid #999;
}

.sheet-tabs .current {
    width: 70px;
}

.sheet-tabs .after {
    flex: 1;
    border-top: 1px solid #999;
}

/* promo card in the corner */
.info-card {
    position: absolute;
    top: 12px;
    right: 8px;
    display: flex;
    align-items: center;
    gap: 20px;
    height: 41px;
    padding: 0 8px;
    background-color: #fff;
    color: #111;
    font-family: Roboto, sans-serif;
    font-size: 17px;
    text-decoration: none;
}
```
